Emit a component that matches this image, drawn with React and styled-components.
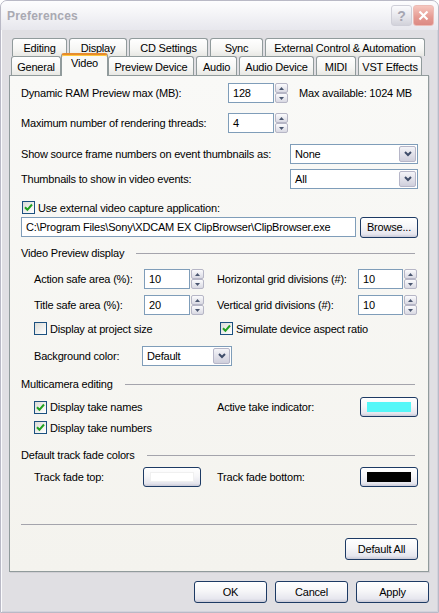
import React from "react";
import styled, { createGlobalStyle } from "styled-components";

const GlobalStyle = createGlobalStyle`
  html, body { margin: 0; padding: 0; background: #ffffff; }
  body {
    font-family: "Liberation Sans", Arial, sans-serif;
    font-size: 11px;
    letter-spacing: -0.2px;
    color: #000;
  }
  * { box-sizing: border-box; }
`;

const Window = styled.div`
  width: 439px;
  height: 613px;
  display: flex;
  flex-direction: column;
  background: #e0dfe3;
  border: 1px solid #b9b9c6;
  border-radius: 7px 7px 0 0;
  box-shadow: inset 1px 0 0 #fbfbfd, inset -1px 0 0 #d2d2dc, inset 0 -1px 0 #d2d2dc;
  overflow: hidden;
`;

const TitleBar = styled.div`
  height: 29px;
  flex-shrink: 0;
  display: flex;
  align-items: center;
  padding: 0 4px 0 6px;
  background: linear-gradient(#fdfdfe, #f4f4f7 45%, #e7e7ed);
`;

const Title = styled.div`
  flex: 1;
  font-weight: bold;
  font-size: 12px;
  color: #a9a9b2;
  letter-spacing: 0.2px;
  padding-top: 1px;
`;

const CaptionButton = styled.div`
  width: 21px;
  height: 21px;
  margin-left: 1px;
  border-radius: 3px;
  display: flex;
  align-items: center;
  justify-content: center;
  border: 1px solid ${(p) => (p.$close ? "#ecbcb6" : "#cfcfd8")};
  background: ${(p) =>
    p.$close
      ? "linear-gradient(#f6c6be, #e59a92 60%, #dc8a84)"
      : "linear-gradient(#fbfbfd, #e4e4ea 60%, #d2d2da)"};
  color: #a6a6b2;
  font-weight: bold;
  font-size: 14px;
`;

const Body = styled.div`
  flex: 1;
  display: flex;
  flex-direction: column;
  padding: 8px 9px 0 8px;
`;

const TabRow = styled.div`
  display: flex;
  gap: 2px;
  height: ${(p) => p.$h}px;
  padding-left: ${(p) => p.$indent}px;
  position: relative;
  z-index: ${(p) => p.$z};
`;

const Tab = styled.div`
  width: ${(p) => p.$w}px;
  height: 100%;
  flex-shrink: 0;
  display: flex;
  align-items: center;
  justify-content: center;
  white-space: nowrap;
  border: 1px solid #919b9c;
  border-bottom: none;
  border-radius: 3px 3px 0 0;
  background: linear-gradient(#ffffff, #f6f6f4 60%, #e8e8e4);
  padding-top: 1px;
`;

const ActiveTab = styled(Tab)`
  height: calc(100% + 4px);
  margin: -3px -2px -1px -2px;
  align-items: flex-start;
  padding-top: 2px;
  border-top: 2px solid #e68b2c;
  box-shadow: inset 0 1px 0 #ffc83c;
  background: #f9f9f7;
  position: relative;
  z-index: 2;
`;

const Panel = styled.div`
  height: 497px;
  flex-shrink: 0;
  border: 1px solid #919b9c;
  background: linear-gradient(#f9f9f7, #f4f3ee);
  padding: 7px 10px 0 11px;
  display: flex;
  flex-direction: column;
  box-shadow: 1px 1px 0 #d0cfd4;
`;

const Row = styled.div`
  display: flex;
  align-items: center;
  height: ${(p) => p.$h || 20}px;
  margin-top: ${(p) => p.$mt || 0}px;
  padding-left: ${(p) => p.$indent || 0}px;
`;

const Split = styled.div`
  display: grid;
  grid-template-columns: 196px 1fr;
  align-items: center;
  height: ${(p) => p.$h || 20}px;
  margin-top: ${(p) => p.$mt || 0}px;
`;

const Cell = styled.div`
  display: flex;
  align-items: center;
  padding-left: ${(p) => p.$indent || 0}px;
  height: 100%;
`;

const Label = styled.span`
  width: ${(p) => (p.$w ? `${p.$w}px` : "auto")};
  flex-shrink: 0;
  white-space: nowrap;
`;

const Note = styled.span`
  margin-left: 11px;
  white-space: nowrap;
`;

const Field = styled.div`
  width: ${(p) => (p.$w ? `${p.$w}px` : "auto")};
  flex: ${(p) => (p.$w ? "none" : 1)};
  height: 20px;
  border: 1px solid #7f9db9;
  background: #fff;
  display: flex;
  align-items: center;
  padding-left: 4px;
  white-space: nowrap;
  overflow: hidden;
`;

const SpinBox = styled.div`
  display: flex;
  flex-direction: column;
  width: 13px;
  height: 20px;
  margin-left: 1px;
`;

const SpinButton = styled.div`
  flex: 1;
  border: 1px solid #b6b6c6;
  border-radius: 2px;
  background: linear-gradient(#fbfbfd, #d9d9e3);
  display: flex;
  align-items: center;
  justify-content: center;
`;

const Select = styled.div`
  width: ${(p) => p.$w}px;
  height: 20px;
  margin-left: ${(p) => (p.$auto ? "auto" : "0")};
  border: 1px solid #7f9db9;
  background: #fff;
  display: flex;
  align-items: center;
  padding: 1px;
`;

const SelectText = styled.span`
  flex: 1;
  padding-left: 3px;
`;

const DropButton = styled.div`
  width: 17px;
  height: 16px;
  border: 1px solid #b6b6c8;
  border-radius: 2px;
  background: linear-gradient(#f4f4f8, #cfcfdc);
  display: flex;
  align-items: center;
  justify-content: center;
`;

const CheckRow = styled.label`
  display: flex;
  align-items: center;
  gap: 3px;
  white-space: nowrap;
`;

const Box = styled.span`
  width: 13px;
  height: 13px;
  border: 1px solid #1c5180;
  background: linear-gradient(135deg, #dcdcd7, #ffffff);
  display: flex;
  align-items: center;
  justify-content: center;
`;

const Button = styled.div`
  width: ${(p) => p.$w || 73}px;
  height: ${(p) => p.$h || 22}px;
  margin-left: ${(p) => (p.$auto ? "auto" : `${p.$ml || 0}px`)};
  flex-shrink: 0;
  border: 1px solid #1d3a64;
  border-radius: 3px;
  background: linear-gradient(#ffffff, #f6f6f8 45%, #e6e6ee 85%, #c9c9d6);
  display: flex;
  align-items: center;
  justify-content: center;
  white-space: nowrap;
`;

const Swatch = styled.span`
  width: 44px;
  height: 10px;
  background: ${(p) => p.$color};
  border: ${(p) => (p.$color === "#ffffff" ? "1px solid #f0f0f0" : "none")};
`;

const GroupHeader = styled.div`
  display: flex;
  align-items: center;
  height: 14px;
  margin-top: ${(p) => p.$mt}px;
  white-space: nowrap;
  &::after {
    content: "";
    flex: 1;
    height: 1px;
    margin: 1px 3px 0 12px;
    background: #a4a4ac;
  }
`;

const Separator = styled.div`
  height: 1px;
  margin: ${(p) => p.$mt}px 1px 0 0;
  background: #a4a4ac;
`;

const Footer = styled.div`
  display: flex;
  justify-content: flex-end;
  gap: 8px;
  margin-top: 9px;
`;

const Arrow = ({ up }) => (
  <svg width="5" height="3" viewBox="0 0 5 3">
    <path d={up ? "M0 3 L2.5 0 L5 3 Z" : "M0 0 L2.5 3 L5 0 Z"} fill="#4a5670" />
  </svg>
);

const NumberInput = ({ value, w = 46 }) => (
  <>
    <Field $w={w}>{value}</Field>
    <SpinBox>
      <SpinButton>
        <Arrow up />
      </SpinButton>
      <SpinButton>
        <Arrow />
      </SpinButton>
    </SpinBox>
  </>
);

const Dropdown = ({ value, w, auto }) => (
  <Select $w={w} $auto={auto}>
    <SelectText>{value}</SelectText>
    <DropButton>
      <svg width="8" height="6" viewBox="0 0 8 6">
        <path d="M1 1 L4 4 L7 1" stroke="#3f4d6a" strokeWidth="2" fill="none" />
      </svg>
    </DropButton>
  </Select>
);

const Checkbox = ({ checked, children }) => (
  <CheckRow>
    <Box>
      {checked && (
        <svg width="9" height="9" viewBox="0 0 9 9">
          <path d="M1 4.2 L3.4 6.8 L8 1.5" stroke="#21a121" strokeWidth="2" fill="none" />
        </svg>
      )}
    </Box>
    {children}
  </CheckRow>
);

const ColorButton = ({ color, auto, ml }) => (
  <Button $w={58} $h={20} $auto={auto} $ml={ml}>
    <Swatch $color={color} />
  </Button>
);

const backTabs = [
  ["Editing", 55],
  ["Display", 58],
  ["CD Settings", 79],
  ["Sync", 53],
  ["External Control & Automation", 160],
];

const frontTabs = [
  ["General", 50],
  ["Video", 47, true],
  ["Preview Device", 86],
  ["Audio", 41],
  ["Audio Device", 75],
  ["MIDI", 40],
  ["VST Effects", 64],
];

export default function App() {
  return (
    <>
      <GlobalStyle />
      <Window>
        <TitleBar>
          <Title>Preferences</Title>
          <CaptionButton>?</CaptionButton>
          <CaptionButton $close>
            <svg width="11" height="11" viewBox="0 0 11 11">
              <path d="M1.5 1.5 L9.5 9.5 M9.5 1.5 L1.5 9.5" stroke="#ffffff" strokeWidth="2.2" />
            </svg>
          </CaptionButton>
        </TitleBar>

        <Body>
          <TabRow $h={18} $indent={3} $z={0}>
            {backTabs.map(([name, w]) => (
              <Tab key={name} $w={w}>{name}</Tab>
            ))}
          </TabRow>
          <TabRow $h={19} $indent={2} $z={1}>
            {frontTabs.map(([name, w, active]) =>
              active ? (
                <ActiveTab key={name} $w={w}>{name}</ActiveTab>
              ) : (
                <Tab key={name} $w={w}>{name}</Tab>
              )
            )}
          </TabRow>

          <Panel>
            <Row>
              <Label $w={207}>Dynamic RAM Preview max (MB):</Label>
              <NumberInput value="128" />
              <Note>Max available: 1024 MB</Note>
            </Row>
            <Row $mt={10}>
              <Label $w={207}>Maximum number of rendering threads:</Label>
              <NumberInput value="4" />
            </Row>
            <Row $mt={11}>
              <Label>Show source frame numbers on event thumbnails as:</Label>
              <Dropdown value="None" w={128} auto />
            </Row>
            <Row $mt={5}>
              <Label>Thumbnails to show in video events:</Label>
              <Dropdown value="All" w={128} auto />
            </Row>
            <Row $mt={11} $h={15} $indent={1}>
              <Checkbox checked>Use external video capture application:</Checkbox>
            </Row>
            <Row $mt={2}>
              <Field>C:\Program Files\Sony\XDCAM EX ClipBrowser\ClipBrowser.exe</Field>
              <Button $w={58} $h={21} $ml={4}>Browse...</Button>
            </Row>

            <GroupHeader $mt={9}>Video Preview display</GroupHeader>
            <Split $mt={9}>
              <Cell $indent={13}>
                <Label $w={110}>Action safe area (%):</Label>
                <NumberInput value="10" />
              </Cell>
              <Cell>
                <Label $w={141}>Horizontal grid divisions (#):</Label>
                <NumberInput value="10" w={45} />
              </Cell>
            </Split>
            <Split $mt={6}>
              <Cell $indent={13}>
                <Label $w={110}>Title safe area (%):</Label>
                <NumberInput value="20" />
              </Cell>
              <Cell>
                <Label $w={141}>Vertical grid divisions (#):</Label>
                <NumberInput value="10" w={45} />
              </Cell>
            </Split>
            <Split $mt={6} $h={15}>
              <Cell $indent={13}>
                <Checkbox>Display at project size</Checkbox>
              </Cell>
              <Cell $indent={3}>
                <Checkbox checked>Simulate device aspect ratio</Checkbox>
              </Cell>
            </Split>
            <Row $mt={10} $indent={13}>
              <Label $w={108}>Background color:</Label>
              <Dropdown value="Default" w={90} />
            </Row>

            <GroupHeader $mt={11}>Multicamera editing</GroupHeader>
            <Split $mt={6}>
              <Cell $indent={13}>
                <Checkbox checked>Display take names</Checkbox>
              </Cell>
              <Cell>
                <Label>Active take indicator:</Label>
                <ColorButton color="#55f7f8" auto />
              </Cell>
            </Split>
            <Row $mt={3} $h={15} $indent={13}>
              <Checkbox checked>Display take numbers</Checkbox>
            </Row>

            <GroupHeader $mt={13}>Default track fade colors</GroupHeader>
            <Split $mt={5}>
              <Cell $indent={13}>
                <Label $w={109}>Track fade top:</Label>
                <ColorButton color="#ffffff" />
              </Cell>
              <Cell>
                <Label>Track fade bottom:</Label>
                <ColorButton color="#000000" auto />
              </Cell>
            </Split>

            <Separator $mt={37} />
            <Row $mt={13} $h={22}>
              <Button $w={73} $auto>Default All</Button>
            </Row>
          </Panel>

          <Footer>
            <Button>OK</Button>
            <Button>Cancel</Button>
            <Button>Apply</Button>
          </Footer>
        </Body>
      </Window>
    </>
  );
}
